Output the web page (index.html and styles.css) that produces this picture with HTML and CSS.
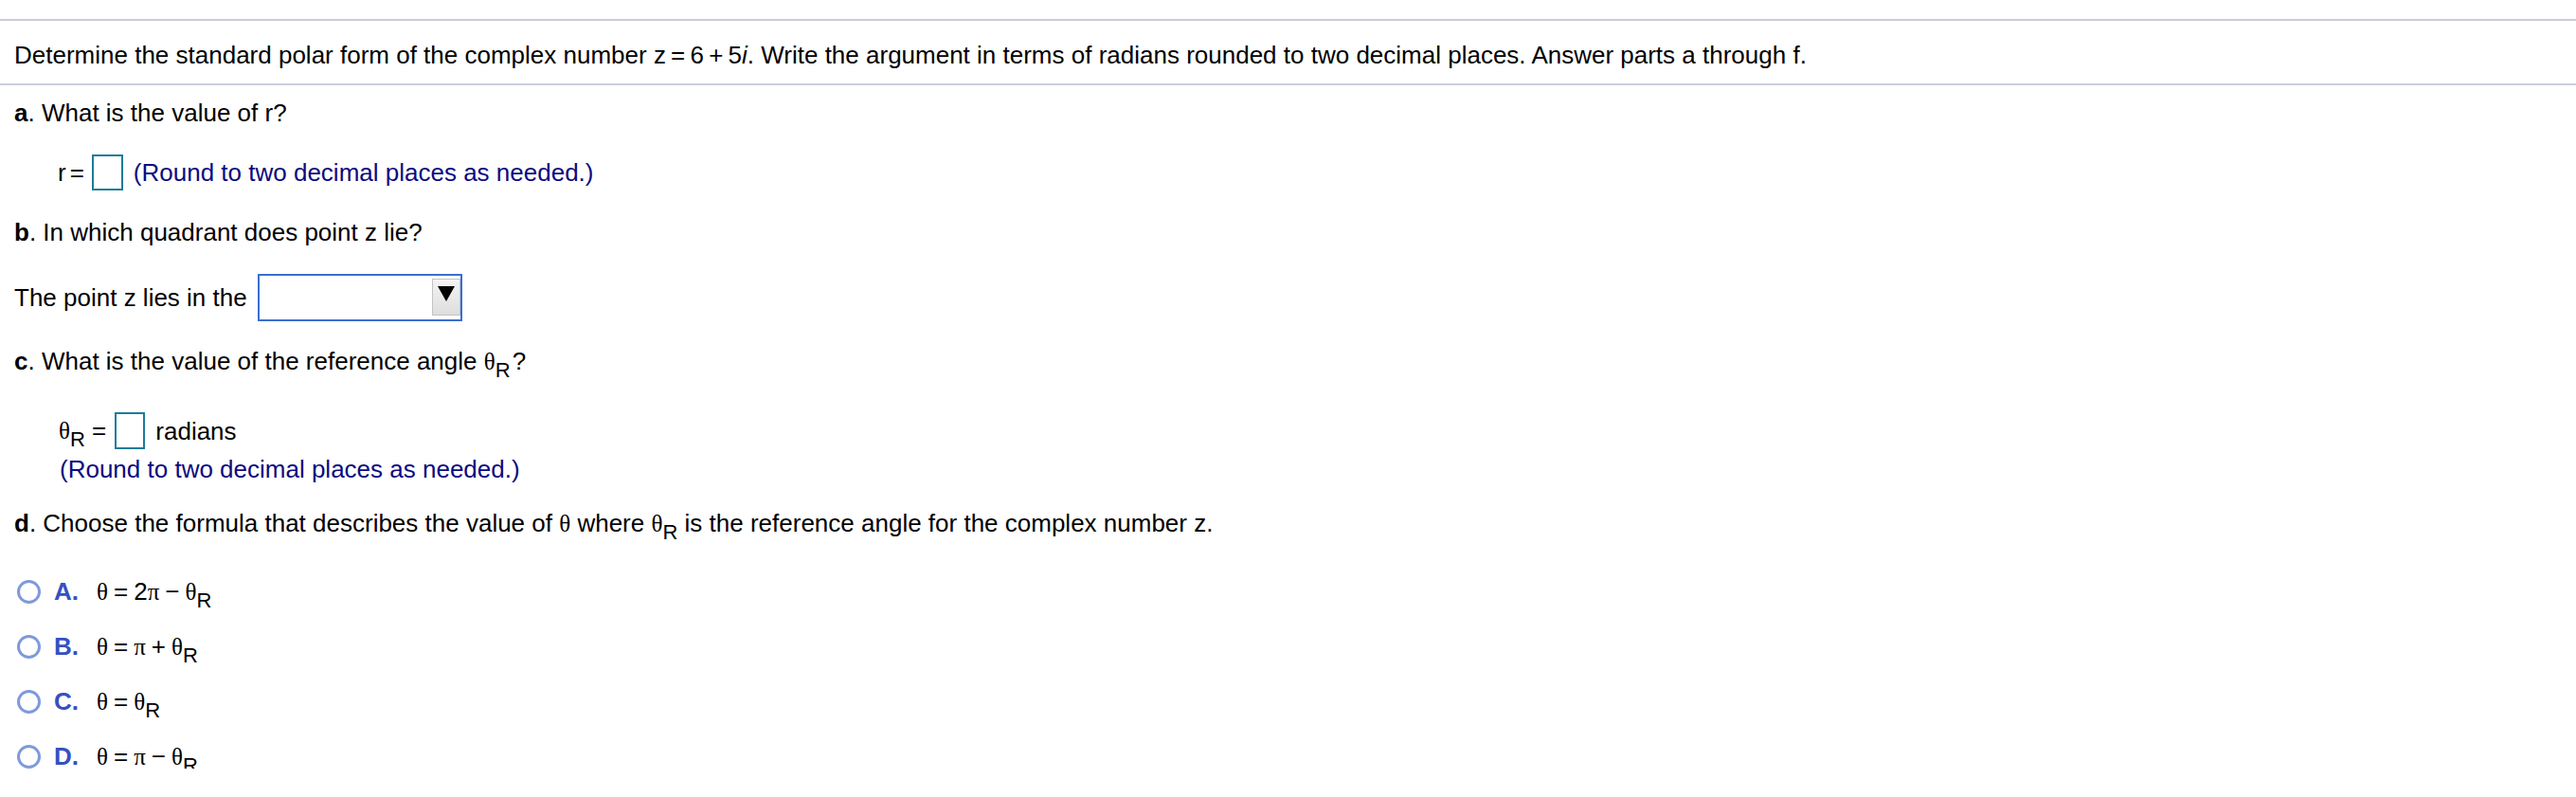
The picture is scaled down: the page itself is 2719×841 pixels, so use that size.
FILE: index.html
```html
<!DOCTYPE html>
<html>
<head>
<meta charset="utf-8">
<link rel="stylesheet" href="styles.css">
</head>
<body>
<div class="header">
  <p class="title">Determine the standard polar form of the complex number z&#8201;=&#8201;6&#8201;+&#8201;5<i>i</i>. Write the argument in terms of radians rounded to two decimal places. Answer parts a through f.</p>
</div>
<div class="content">
  <p class="q q-a"><b>a</b>. What is the value of r?</p>
  <div class="row row-r">
    <span>r</span><span class="eq">=</span><span class="box box-r"></span><span class="hint">(Round to two decimal places as needed.)</span>
  </div>

  <p class="q q-b"><b>b</b>. In which quadrant does point z lie?</p>
  <div class="row row-pt">
    <span>The point z lies in the</span>
    <div class="select">
      <div class="select-btn">
        <svg width="18" height="16" viewBox="0 0 18 16"><polygon points="0,0 18,0 9,16" fill="#000"/></svg>
      </div>
    </div>
  </div>

  <p class="q q-c"><b>c</b>. What is the value of the reference angle <span class="sym">θ</span><span class="sub">R</span>&#8202;?</p>
  <div class="row row-theta">
    <span><span class="sym">θ</span><span class="sub">R</span> =</span><span class="box box-t"></span><span>radians</span>
  </div>
  <p class="hint hint-line">(Round to two decimal places as needed.)</p>

  <p class="q q-d"><b>d</b>. Choose the formula that describes the value of <span class="sym">θ</span> where <span class="sym">θ</span><span class="sub">R</span> is the reference angle for the complex number z.</p>

  <div class="options">
    <div class="opt">
      <span class="radio"></span><span class="letter">A.</span>
      <span class="formula"><span class="sym">θ</span><span class="op">=</span>2<span class="sym">π</span><span class="op">−</span><span class="sym">θ</span><span class="sub">R</span></span>
    </div>
    <div class="opt">
      <span class="radio"></span><span class="letter">B.</span>
      <span class="formula"><span class="sym">θ</span><span class="op">=</span><span class="sym">π</span><span class="op">+</span><span class="sym">θ</span><span class="sub">R</span></span>
    </div>
    <div class="opt">
      <span class="radio"></span><span class="letter">C.</span>
      <span class="formula"><span class="sym">θ</span><span class="op">=</span><span class="sym">θ</span><span class="sub">R</span></span>
    </div>
    <div class="opt">
      <span class="radio"></span><span class="letter">D.</span>
      <span class="formula"><span class="sym">θ</span><span class="op">=</span><span class="sym">π</span><span class="op">−</span><span class="sym">θ</span><span class="sub">R</span></span>
    </div>
  </div>
</div>
</body>
</html>
```

FILE: styles.css
```css
body {
  margin: 0;
  background: #ffffff;
  color: #000000;
  font-family: "Liberation Sans", Arial, sans-serif;
  font-size: 26px;
  line-height: 26px;
}

p {
  margin: 0;
}

.header {
  margin-top: 20px;
  border-top: 2px solid #c9cedb;
  border-bottom: 2px solid #c9cedb;
  padding: 23px 0 17px 15px;
}

.content {
  padding-left: 15px;
}

.q-a { margin-top: 16px; }
.q-b { margin-top: 31px; }
.q-c { margin-top: 29px; }
.q-d { margin-top: 31px; }

.row {
  display: flex;
  align-items: center;
}

.row-r {
  height: 38px;
  margin-top: 31px;
  padding-left: 46px;
}

.eq {
  margin-left: 4px;
}

.box {
  display: block;
  border: 2px solid #1b7c98;
  background: #fff;
}

.box-r {
  width: 29px;
  height: 34px;
  margin: 0 11px 0 8px;
}

.hint {
  color: #0b0b80;
}

.row-pt {
  height: 50px;
  margin-top: 31px;
}

.select {
  width: 212px;
  height: 46px;
  margin-left: 11px;
  border: 2px solid #3a6fd0;
  display: flex;
  justify-content: flex-end;
  align-items: flex-start;
}

.select-btn {
  box-sizing: border-box;
  width: 30px;
  height: 39px;
  margin-top: 3px;
  padding-top: 7px;
  border: 1px solid #c4c4c4;
  background: linear-gradient(#f4f4f4, #dedede);
  display: flex;
  justify-content: center;
  align-items: flex-start;
}

.select-btn svg {
  display: block;
}

.row-theta {
  height: 39px;
  margin-top: 40px;
  padding-left: 47px;
}

.box-t {
  width: 28px;
  height: 35px;
  margin: 0 11px 0 9px;
}

.hint-line {
  margin-top: 8px;
  padding-left: 48px;
}

.sym {
  font-family: "Liberation Serif", "Times New Roman", serif;
  font-size: 25px;
}

.sub {
  font-size: 22px;
  vertical-align: -8px;
  line-height: 0;
}

.options {
  margin-top: 45px;
}

.opt {
  display: flex;
  align-items: center;
  height: 26px;
}

.opt + .opt {
  margin-top: 32px;
}

.radio {
  display: block;
  width: 19px;
  height: 19px;
  margin-left: 3px;
  border: 3px solid #8099dc;
  border-radius: 50%;
}

.letter {
  display: block;
  width: 45px;
  margin-left: 14px;
  font-weight: bold;
  color: #3550c2;
}

.formula {
  display: block;
  white-space: nowrap;
}

.op {
  margin: 0 6px;
}
```
